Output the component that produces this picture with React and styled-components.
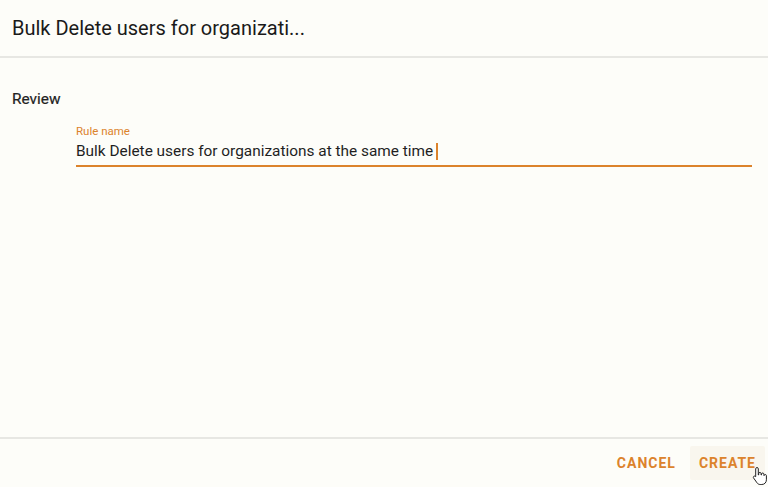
import React from 'react';
import styled, { createGlobalStyle } from 'styled-components';

const accent = '#dc832c';

const GlobalStyle = createGlobalStyle`
  html, body, #root {
    margin: 0;
    height: 100%;
  }
  body {
    background: #fdfdf9;
    font-family: Roboto, 'Liberation Sans', sans-serif;
    color: #212121;
  }
`;

const Dialog = styled.div`
  position: relative;
  display: flex;
  flex-direction: column;
  height: 487px;
  width: 768px;
  overflow: hidden;
`;

const Header = styled.header`
  height: 58px;
  box-sizing: border-box;
  padding: 0 12px;
  display: flex;
  align-items: center;
  border-bottom: 2px solid #e7e7e3;
`;

const Title = styled.h2`
  margin: 0;
  font-size: 20px;
  font-weight: 400;
  color: #1a1a1a;
`;

const Body = styled.main`
  flex: 1;
  padding: 32px 16px 0 12px;
`;

const StepTitle = styled.div`
  font-size: 15.4px;
  font-weight: 400;
  color: #222;
  line-height: 18px;
  -webkit-text-stroke: 0.2px #222;
`;

const Field = styled.div`
  margin: 17px 0 0 64px;
  border-bottom: 2px solid ${accent};
  padding-bottom: 4px;
`;

const Label = styled.label`
  display: block;
  font-size: 11.5px;
  font-weight: 400;
  color: ${accent};
  line-height: 13px;
`;

const Value = styled.div`
  display: flex;
  align-items: center;
  margin-top: 3px;
  font-size: 15.4px;
  line-height: 20px;
  color: #1f1f1f;
`;

const Caret = styled.span`
  display: inline-block;
  width: 2px;
  height: 17px;
  margin-left: 3px;
  background: ${accent};
`;

const Footer = styled.footer`
  height: 48px;
  border-top: 2px solid #e7e7e3;
  display: flex;
  align-items: center;
  justify-content: flex-end;
  gap: 5px;
  padding-right: 3px;
`;

const Button = styled.button`
  border: 0;
  background: ${({ $hover }) => ($hover ? '#f9f6ee' : 'transparent')};
  color: ${accent};
  font-family: Roboto, 'Liberation Sans', sans-serif;
  font-size: 14px;
  font-weight: 700;
  letter-spacing: 1px;
  height: 34px;
  padding: 0 9px;
  border-radius: 2px;
  cursor: pointer;
`;

const Pointer = styled.svg`
  position: absolute;
  right: 0;
  bottom: 1px;
`;

export default function App() {
  return (
    <>
      <GlobalStyle />
      <Dialog>
        <Header>
          <Title>Bulk Delete users for organizati...</Title>
        </Header>
        <Body>
          <StepTitle>Review</StepTitle>
          <Field>
            <Label>Rule name</Label>
            <Value>
              Bulk Delete users for organizations at the same time
              <Caret />
            </Value>
          </Field>
        </Body>
        <Footer>
          <Button>CANCEL</Button>
          <Button $hover>CREATE</Button>
        </Footer>
        <Pointer width="16" height="20" viewBox="0 0 16 20">
          <path
            d="M5 1.5c.8 0 1.3.6 1.3 1.3V9h.4V7.6c0-.7.5-1.2 1.2-1.2s1.2.5 1.2 1.2V9h.4V8.2c0-.7.5-1.2 1.2-1.2s1.2.5 1.2 1.2V9.5h.3c0-.6.5-1 1.1-1s1.1.5 1.1 1.1v4.2c0 2.6-1.8 4.7-4.6 4.7H8.2c-1.4 0-2.4-.6-3.2-1.7L1.6 12c-.5-.6-.3-1.4.3-1.8.6-.3 1.3-.2 1.7.4l.1.1V2.8c0-.7.6-1.3 1.3-1.3z"
            fill="#fff"
            stroke="#222"
            strokeWidth="1"
          />
        </Pointer>
      </Dialog>
    </>
  );
}
